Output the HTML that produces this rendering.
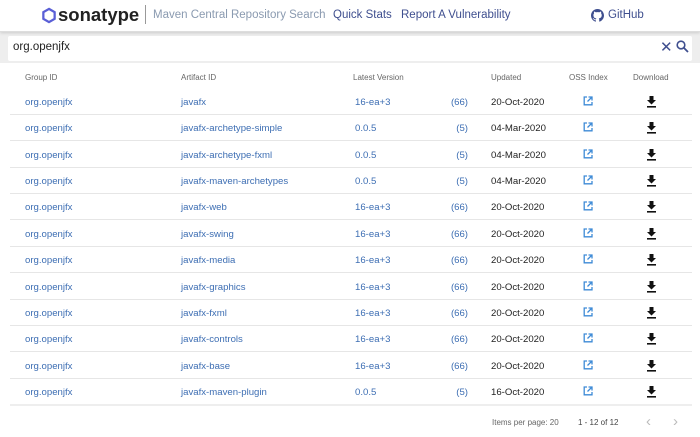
<!DOCTYPE html>
<html><head><style>
*{margin:0;padding:0;box-sizing:border-box}
body{width:700px;height:437px;overflow:hidden;background:#fff;font-family:"Liberation Sans","DejaVu Sans",sans-serif;position:relative}
.hdr{position:absolute;left:0;top:0;width:700px;height:32px;background:#fff;border-bottom:1px solid #ddd;box-shadow:0 1px 3px rgba(0,0,0,.15)}
.gray{position:absolute;left:0;top:32px;width:700px;height:31px;background:#eee}
.search{position:absolute;left:8px;top:36px;width:684px;height:25px;background:#fff;border-radius:2px;font-size:11.5px;color:#222;padding:5px 0 0 5px}
.t{position:absolute;white-space:nowrap;font-size:9.6px}
.h{color:#666;font-size:8px}
.a{color:#3d6eb3}
.d{color:#222}
.line{position:absolute;left:10px;width:682px;height:1px;background:#e6e6e6}
</style></head><body>
<div class="gray"></div>
<div class="hdr"></div>
<svg style="position:absolute;left:41px;top:7px" width="16" height="17" viewBox="0 0 17 18"><polygon points="8.5,2 14.5,5.5 14.5,12.5 8.5,16 2.5,12.5 2.5,5.5" fill="none" stroke="#5a5fd6" stroke-width="2.4"/></svg>
<div class="t" style="left:58px;top:4px;font-size:18.5px;font-weight:bold;color:#222">sonatype</div>
<div style="position:absolute;left:145px;top:5px;width:1px;height:19px;background:#999"></div>
<div class="t" style="left:153px;top:9px;font-size:11.5px;color:#8a9ab0">Maven Central Repository Search</div>
<div class="t" style="left:333px;top:9px;font-size:11.5px;color:#3f4f8f">Quick Stats</div>
<div class="t" style="left:401px;top:9px;font-size:11.5px;color:#3f4f8f">Report A Vulnerability</div>
<svg style="position:absolute;left:591px;top:9px" width="13" height="13" viewBox="0 0 16 16"><path fill="#3f4f8f" d="M8 0C3.6 0 0 3.6 0 8c0 3.5 2.3 6.5 5.5 7.6.4.1.5-.2.5-.4v-1.4c-2.200.5-2.700-1-2.700-1-.4-.9-.9-1.2-.9-1.2-.7-.5.1-.5.1-.5.8.1 1.2.8 1.2.8.7 1.3 1.9.9 2.4.7.1-.5.3-.9.5-1.1-1.8-.2-3.6-.9-3.6-4 0-.9.3-1.6.8-2.1-.1-.2-.4-1 .1-2.1 0 0 .7-.2 2.2.8.6-.2 1.3-.3 2-.3s1.4.1 2 .3c1.5-1 2.2-.8 2.2-.8.4 1.1.2 1.9.1 2.1.5.6.8 1.3.8 2.1 0 3.1-1.9 3.7-3.6 3.9.3.3.5.8.5 1.5v2.2c0 .2.1.5.6.4C13.7 14.5 16 11.5 16 8c0-4.4-3.6-8-8-8z"/></svg>
<div class="t" style="left:608px;top:9px;font-size:11.5px;color:#3f4f8f">GitHub</div>
<div class="search">org.openjfx</div>
<div class="t" style="left:660px;top:38px;font-size:15px;color:#3f4f8f">✕</div>
<svg style="position:absolute;left:676px;top:40px" width="13" height="13" viewBox="0 0 13 13"><circle cx="5" cy="5" r="3.8" fill="none" stroke="#3f4f8f" stroke-width="1.6"/><line x1="8" y1="8" x2="12" y2="12" stroke="#3f4f8f" stroke-width="1.8"/></svg>
<div class="t h" style="left:25px;top:73px">Group ID</div>
<div class="t h" style="left:181px;top:73px">Artifact ID</div>
<div class="t h" style="left:353px;top:73px">Latest Version</div>
<div class="t h" style="left:491px;top:73px">Updated</div>
<div class="t h" style="left:569px;top:73px">OSS Index</div>
<div class="t h" style="left:633px;top:73px">Download</div>
<div id="rows"></div>
<script>
var R=[["javafx","16-ea+3","(66)","20-Oct-2020"],["javafx-archetype-simple","0.0.5","(5)","04-Mar-2020"],["javafx-archetype-fxml","0.0.5","(5)","04-Mar-2020"],["javafx-maven-archetypes","0.0.5","(5)","04-Mar-2020"],["javafx-web","16-ea+3","(66)","20-Oct-2020"],["javafx-swing","16-ea+3","(66)","20-Oct-2020"],["javafx-media","16-ea+3","(66)","20-Oct-2020"],["javafx-graphics","16-ea+3","(66)","20-Oct-2020"],["javafx-fxml","16-ea+3","(66)","20-Oct-2020"],["javafx-controls","16-ea+3","(66)","20-Oct-2020"],["javafx-base","16-ea+3","(66)","20-Oct-2020"],["javafx-maven-plugin","0.0.5","(5)","16-Oct-2020"]];
var h="";
R.forEach(function(r,i){var y=95+i*26.36;var ty=y+2;
h+='<div class="t a" style="left:25px;top:'+ty+'px">org.openjfx</div>';
h+='<div class="t a" style="left:181px;top:'+ty+'px">'+r[0]+'</div>';
h+='<div class="t a" style="left:355px;top:'+ty+'px">'+r[1]+'</div>';
h+='<div class="t a" style="left:428px;width:40px;text-align:right;top:'+ty+'px">'+r[2]+'</div>';
h+='<div class="t d" style="left:491px;top:'+ty+'px">'+r[3]+'</div>';
h+='<svg style="position:absolute;left:583px;top:'+(y+1)+'px" width="10" height="10" viewBox="0 0 10 10"><path d="M4 1H1.2V8.8H9V6" fill="none" stroke="#3d8ad6" stroke-width="1.3"/><path d="M5.5 1H9V4.5M9 1L4.5 5.5" fill="none" stroke="#3d8ad6" stroke-width="1.3"/></svg>';
h+='<svg style="position:absolute;left:646px;top:'+(y+1)+'px" width="11" height="12" viewBox="0 0 11 12"><path d="M3.5 0H7.5V4H10L5.5 8.5 1 4H3.5Z" fill="#111"/><rect x="1" y="10" width="9" height="1.6" fill="#111"/></svg>';
h+='<div class="line" style="top:'+(y+19)+'px"></div>';
});
document.getElementById("rows").innerHTML=h;
</script>
<div style="position:absolute;left:10px;top:404px;width:682px;height:2px;background:#eee"></div>
<div class="t" style="left:492px;top:418px;font-size:8px;color:#666">Items per page: 20</div>
<div class="t" style="left:578px;top:418px;font-size:8px;color:#444">1 - 12 of 12</div>
<div class="t" style="left:646px;top:413px;font-size:15px;color:#bbb">‹</div>
<div class="t" style="left:673px;top:413px;font-size:15px;color:#bbb">›</div>
</body></html>
